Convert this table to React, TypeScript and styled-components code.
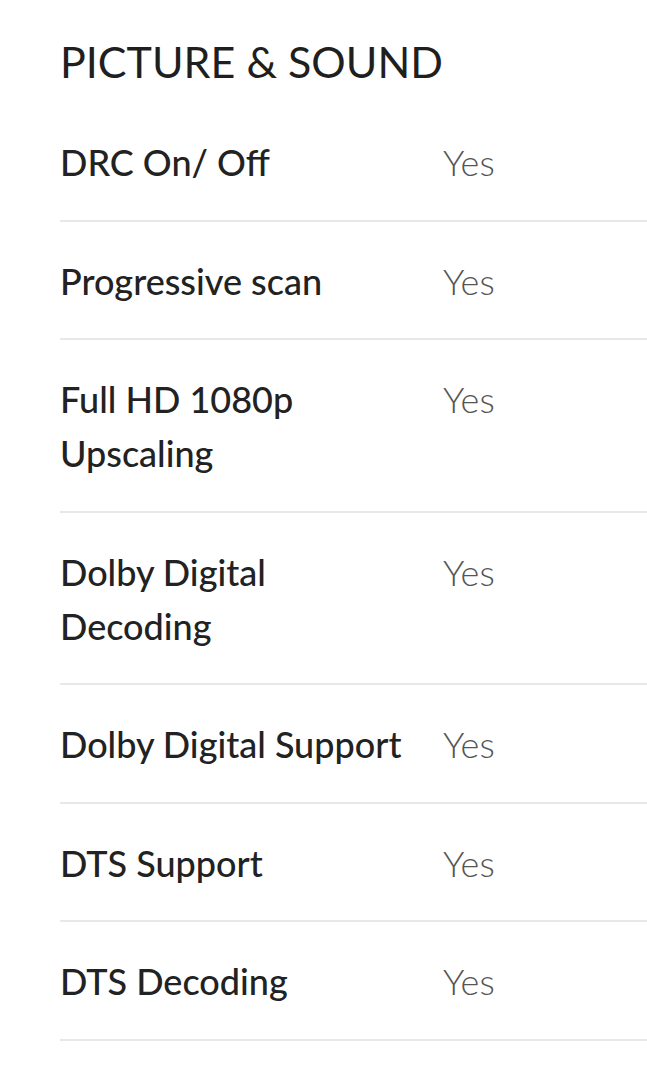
import React from "react";
import styled, { createGlobalStyle } from "styled-components";

const Global = createGlobalStyle`
  html, body { margin: 0; padding: 0; background: #fff; }
  body { font-family: "Lato", "Noto Sans", sans-serif; }
`;

const Section = styled.section`
  padding: 31px 0 0 60px;
`;

const Heading = styled.h2`
  margin: 0 0 10px 0;
  font-size: 43px;
  line-height: 62px;
  font-weight: 400;
  color: #1f1f1f;
`;

const List = styled.dl`
  margin: 0;
`;

const Row = styled.div`
  display: grid;
  grid-template-columns: 383px 1fr;
  padding: 32px 0 30.5px;
  border-bottom: 2px solid #e8e8e8;
`;

const Label = styled.dt`
  margin: 0;
  padding-right: 20px;
  font-size: 36px;
  line-height: 54px;
  font-weight: 500;
  color: #222;
`;

const Value = styled.dd`
  margin: 0;
  font-size: 36px;
  line-height: 54px;
  font-weight: 300;
  color: #555;
`;

const specs = [
  ["DRC On/ Off", "Yes"],
  ["Progressive scan", "Yes"],
  ["Full HD 1080p Upscaling", "Yes"],
  ["Dolby Digital Decoding", "Yes"],
  ["Dolby Digital Support", "Yes"],
  ["DTS Support", "Yes"],
  ["DTS Decoding", "Yes"],
];

export default function App() {
  return (
    <>
      <Global />
      <Section>
        <Heading>PICTURE &amp; SOUND</Heading>
        <List>
          {specs.map(([k, v]) => (
            <Row key={k}>
              <Label>{k}</Label>
              <Value>{v}</Value>
            </Row>
          ))}
        </List>
      </Section>
    </>
  );
}
